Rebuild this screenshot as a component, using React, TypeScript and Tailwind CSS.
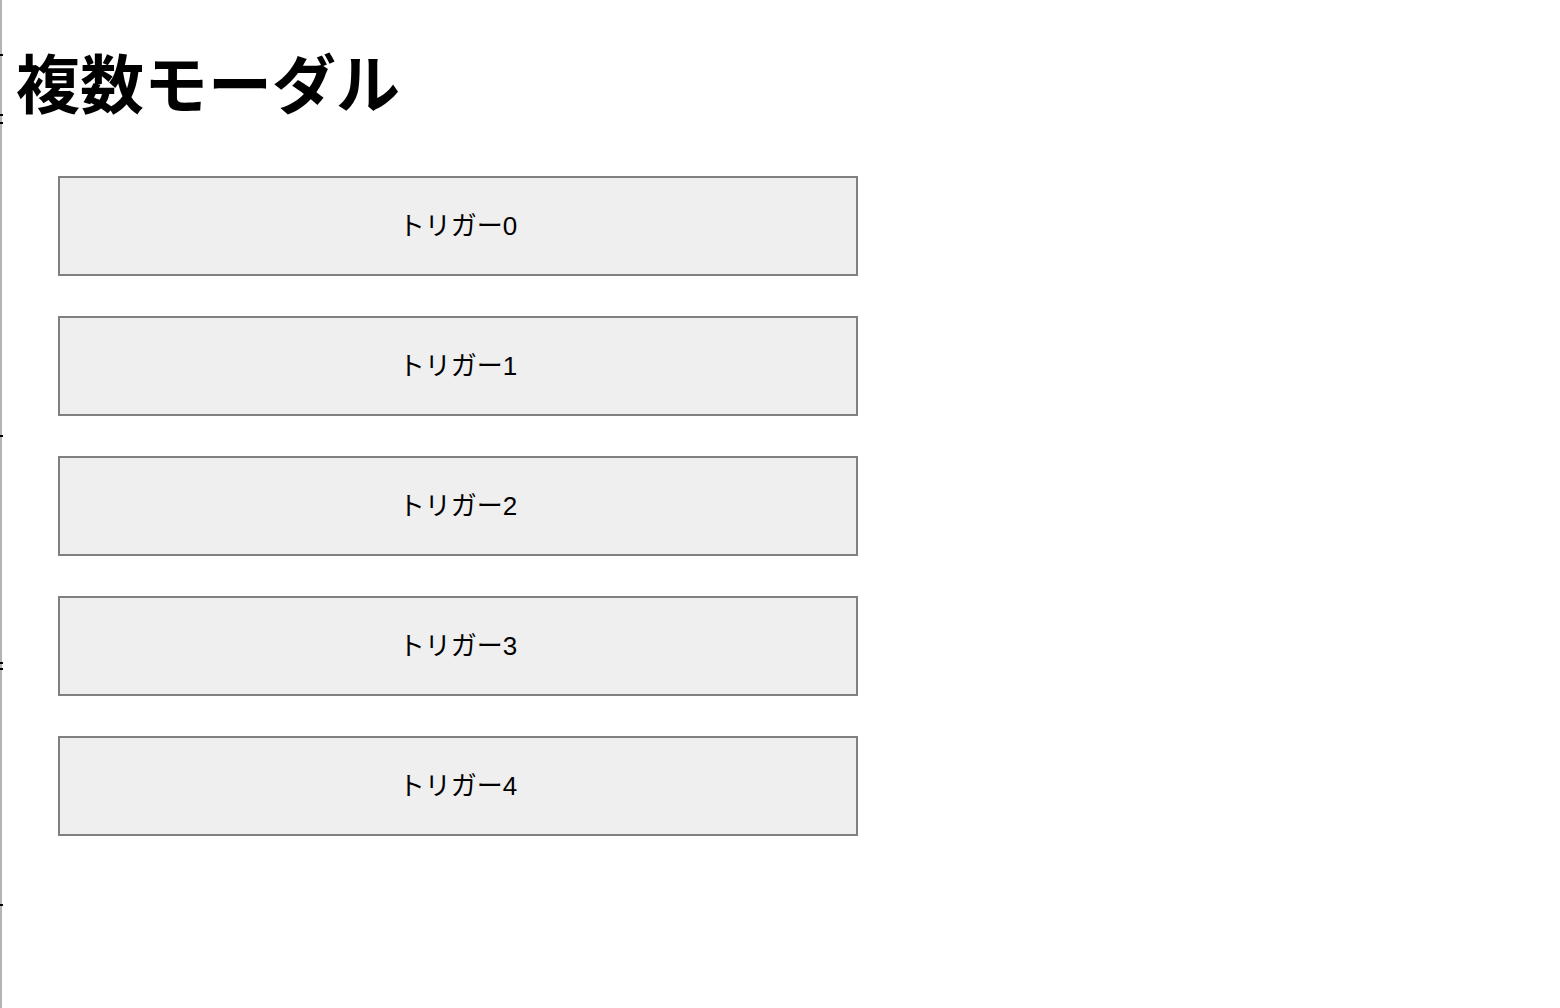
const triggers = [0, 1, 2, 3, 4];

// small dark ticks on the left edge line
const ticks = [54, 114, 122, 435, 662, 668, 904];

export default function App() {
    return (
        <div className="relative min-h-[1008px] bg-white border-l-2 border-[#b4b4b4] font-['Liberation_Sans','Noto_Sans_CJK_JP',sans-serif] text-black">
            {ticks.map(t => (
                <div key={t} className="absolute left-[-2px] w-[3px] h-[2px] bg-black" style={{ top: t }} />
            ))}
            <div className="pl-[14px] pt-[32px]">
                <h1 className="text-[64px] leading-[96px] font-bold font-['Noto_Sans_CJK_JP',sans-serif]">複数モーダル</h1>
            </div>
            <div className="flex flex-col gap-[40px] pl-[56px] pt-[48px]">
                {triggers.map(i => (
                    <button
                        key={i}
                        className="w-[800px] h-[100px] bg-[#efefef] border-2 border-[#808080] text-[26px] flex items-center justify-center"
                    >
                        トリガー{i}
                    </button>
                ))}
            </div>
        </div>
    )
}
